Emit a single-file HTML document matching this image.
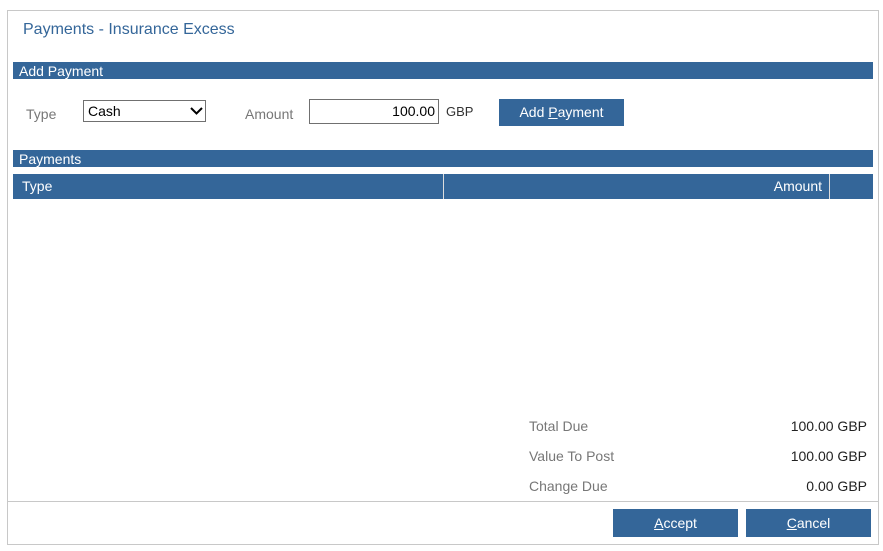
<!DOCTYPE html>
<html><head><style>
body{margin:0;width:883px;height:551px;background:#fff;font-family:"Liberation Sans",sans-serif;font-size:14px;position:relative;overflow:hidden}
.a{position:absolute}
.bar{background:#346699;color:#fff;left:13px;width:860px}
.lbl{color:#777}
.btn{background:#346699;color:#fff;text-align:center;line-height:26px}
</style></head><body>
<div class="a" style="left:7px;top:10px;width:870px;height:533px;border:1px solid #c8c8c8"></div>
<div class="a" style="left:7px;top:501px;width:871px;height:1px;background:#c8c8c8"></div>
<div class="a" style="left:23px;top:21px;font-size:16px;color:#346699">Payments - Insurance Excess</div>
<div class="a bar" style="top:62px;height:17px;line-height:18px;padding-left:6px;width:854px">Add Payment</div>
<div class="a lbl" style="left:26px;top:106px">Type</div>
<div class="a" style="left:83px;top:100px;width:123px;height:22px;border:1px solid #707070;box-sizing:border-box;line-height:20px;padding-left:4px">Cash
<svg class="a" style="left:106px;top:5px" width="13" height="10" viewBox="0 0 13 10"><path d="M1 2 L6.5 7.5 L12 2" stroke="#000" stroke-width="2" fill="none"/></svg></div>
<div class="a lbl" style="left:245px;top:106px">Amount</div>
<div class="a" style="left:309px;top:99px;width:130px;height:25px;border:1px solid #707070;box-sizing:border-box;line-height:23px;text-align:right;padding-right:3px">100.00</div>
<div class="a" style="left:446px;top:104px;font-size:13px;color:#333">GBP</div>
<div class="a btn" style="left:499px;top:99px;width:125px;height:27px;line-height:27px">Add <u>P</u>ayment</div>
<div class="a bar" style="top:150px;height:17px;line-height:18px;padding-left:6px;width:854px">Payments</div>
<div class="a bar" style="top:174px;height:25px;line-height:24px"></div>
<div class="a" style="left:22px;top:174px;line-height:24px;color:#fff">Type</div>
<div class="a" style="left:443px;top:174px;width:1px;height:25px;background:#ddd"></div>
<div class="a" style="left:829px;top:174px;width:1px;height:25px;background:#ddd"></div>
<div class="a" style="left:700px;top:174px;width:122px;text-align:right;line-height:24px;color:#fff">Amount</div>
<div class="a lbl" style="left:529px;top:418px">Total Due</div>
<div class="a lbl" style="left:529px;top:448px">Value To Post</div>
<div class="a lbl" style="left:529px;top:478px">Change Due</div>
<div class="a" style="left:700px;top:418px;width:167px;text-align:right;color:#222">100.00 GBP</div>
<div class="a" style="left:700px;top:448px;width:167px;text-align:right;color:#222">100.00 GBP</div>
<div class="a" style="left:700px;top:478px;width:167px;text-align:right;color:#222">0.00 GBP</div>
<div class="a btn" style="left:613px;top:509px;width:125px;height:28px;line-height:28px"><u>A</u>ccept</div>
<div class="a btn" style="left:746px;top:509px;width:125px;height:28px;line-height:28px"><u>C</u>ancel</div>
</body></html>
